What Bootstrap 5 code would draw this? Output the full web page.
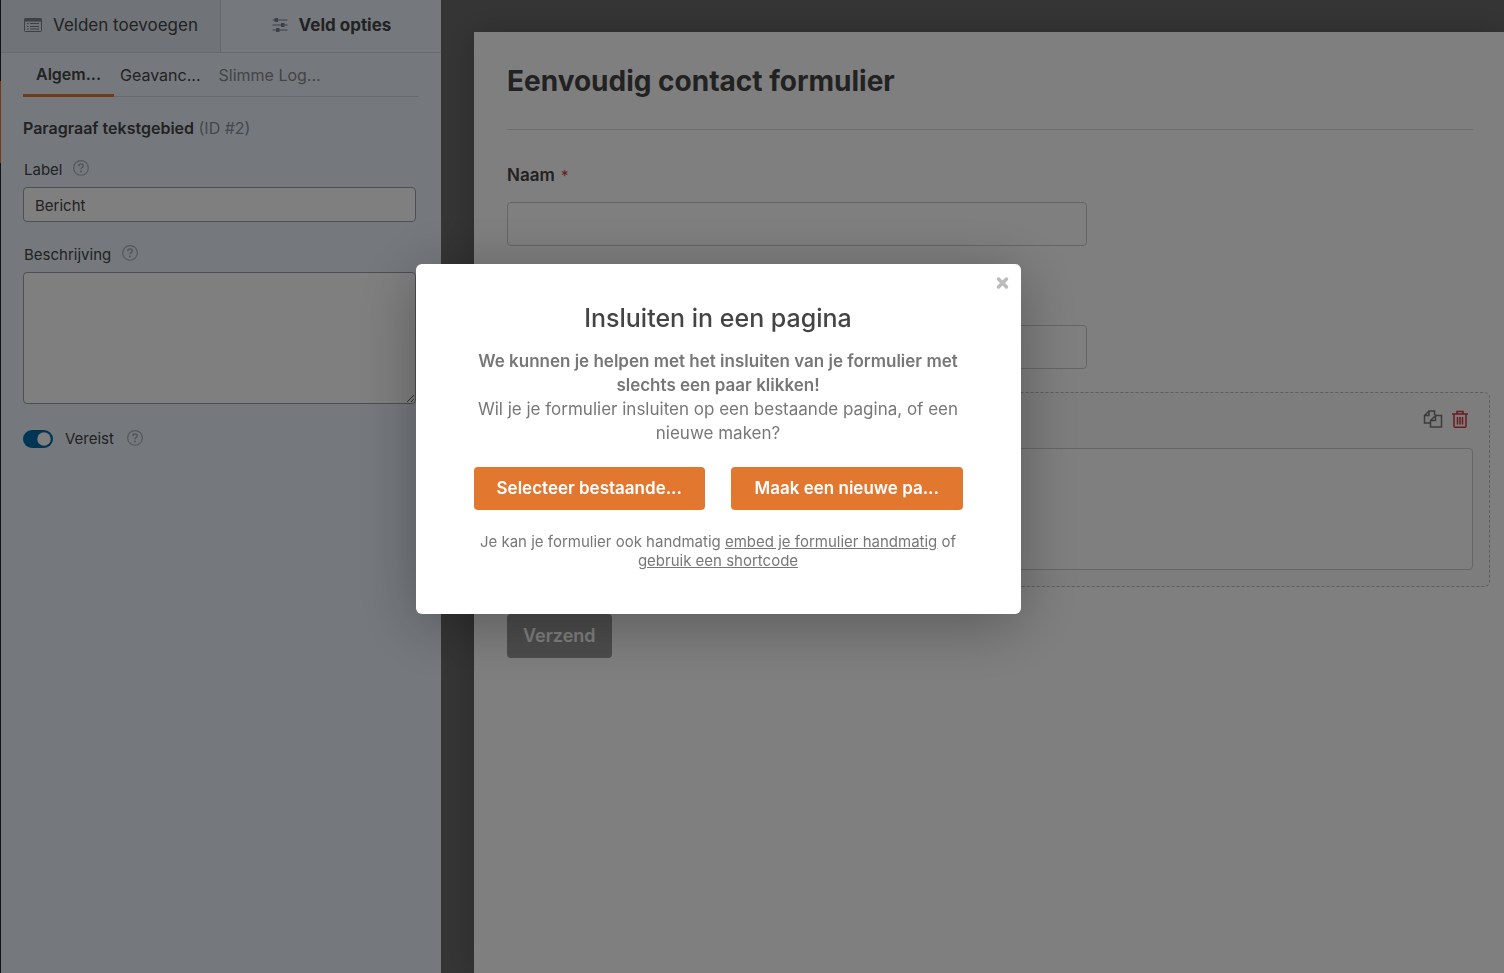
<!DOCTYPE html>
<html lang="nl">
<head>
<meta charset="utf-8">
<meta name="viewport" content="width=device-width, initial-scale=1">
<title>Formulierbouwer</title>
<link href="https://cdn.jsdelivr.net/npm/bootstrap@5.3.0/dist/css/bootstrap.min.css" rel="stylesheet">
<style>
  body { font-family: Inter, "Liberation Sans", sans-serif; font-size: 15px; line-height: 20px; color: #444; background: #6b6b6b; }
  .rail { width: 1px; background: #23262b; }
  .rail-active { height: 82px; margin-top: 81px; background: #e27730; }
  .options-panel { width: 440px; background: #ebf3fc; }
  .panel-tab { height: 53px; border: 0; border-bottom: 1px solid #ced7e0; background: transparent; color: #444; font-size: 17px; gap: 10px; }
  .panel-tab svg { color: #78828f; }
  .panel-tab-idle { background: #e0e8f0; border-right: 1px solid #ced7e0; }
  .group-tabs { margin: 0 22px; height: 44px; border-bottom: 1px solid #ced7e0; }
  .group-tab { border: 0; background: transparent; padding: 0 12px 0 6px; height: 44px; line-height: 42px; font-size: 16px; color: #444; }
  .group-tab.current { padding: 0 13px; border-bottom: 3px solid #e27730; font-weight: 600; }
  .group-tab.muted-tab { color: #86888c; }
  .field-settings { padding: 21px 25px 0 22px; }
  .field-name { font-size: 16px; margin-bottom: 22px; }
  .setting-label { gap: 10px; margin-bottom: 7px; padding-left: 1px; }
  .soft { color: #86919e; }
  .help { color: #a6adb5; }
  .setting { border: 1px solid #999fa6; border-radius: 4px; font-size: 15px; color: #444; padding: 1px 11px 0; height: 35px; background: #fff; margin-bottom: 23px; }
  .setting-area { height: 132px; margin-bottom: 25px; }
  .switch-line { gap: 12px; }
  .switch-line .form-check-input { width: 30px; height: 18px; margin: 0; border: 0; background-color: #036aab; }
  .preview { margin: 32px 0 0 33px; padding: 32px 31px 0 33px; background: #fff; box-shadow: 0 0 30px rgba(0,0,0,.2); }
  .form-title { font-size: 28px; line-height: 34px; font-weight: 700; margin: 0; }
  .form-head { padding-bottom: 31px; border-bottom: 1px solid #ddd; margin-bottom: 16px; }
  .field-box { margin: 0 -17px 6px; padding: 16px; border: 1px dashed transparent; border-radius: 6px; }
  .field-box.selected { border-color: #bbb; background: #fafafa; }
  .field-label { font-size: 17px; line-height: 24px; font-weight: 600; }
  .star { font-size: 15px; font-weight: 400; color: #d63638; margin-left: 2px; }
  .field-top { height: 24px; margin-bottom: 15px; }
  .answer { border: 1px solid #ccc; border-radius: 4px; height: 44px; width: 60%; background: #fff; }
  .answer-area { height: 122px; width: 100%; resize: none; }
  .tool-button { border: 0; background: transparent; padding: 0; line-height: 0; }
  .send { margin-top: 21px; height: 44px; padding: 0 16px; border: 0; border-radius: 4px; background: #999; color: #fff; font-size: 18px; font-weight: 600; }
  .shade { background: rgba(0,0,0,.5); padding: 0 68px 95px 0; }
  .embed-dialog { width: 605px; background: #fff; border-radius: 6px; padding: 36px 58px 44px; box-shadow: 0 10px 60px rgba(0,0,0,.3); color: #777; }
  .embed-dialog h2 { font-size: 25px; line-height: 36px; font-weight: 500; color: #444; margin: 0 0 13px; }
  .embed-text { font-size: 17px; line-height: 24px; margin: 0 0 22px; }
  .embed-text strong { font-weight: 600; }
  .choice { height: 43px; border: 0; border-radius: 4px; background: #e27730; color: #fff; font-size: 17px; font-weight: 600; padding: 0 20px 2px; }
  .choices { gap: 26px; margin-bottom: 22px; }
  .embed-note { font-size: 15px; line-height: 19px; margin: 0; }
  .embed-note a { color: inherit; }
  .dismiss { top: 12px; right: 12px; border: 0; background: transparent; padding: 0; line-height: 0; }
</style>
</head>
<body>
<svg width="0" height="0" class="position-absolute" aria-hidden="true">
  <symbol id="help" viewBox="0 0 16 16"><circle cx="8" cy="7" r="6.5" fill="none" stroke="currentColor"/><path d="M6 5.600C6 4.200 6.800 3.600 8 3.600s2 .7 2 1.700C10 6.700 8 6.600 8 8.200" fill="none" stroke="currentColor" stroke-width="1.400"/><circle cx="8" cy="10.200" r=".9" fill="currentColor"/></symbol>
</svg>
<div class="d-flex min-vh-100">
  <div class="rail flex-shrink-0"><div class="rail-active"></div></div>
  <aside class="options-panel flex-shrink-0">
    <div class="d-flex">
      <button type="button" class="panel-tab panel-tab-idle w-50 d-flex align-items-center justify-content-center pb-1">
        <svg width="20" height="16" viewBox="0 0 20 16" fill="none" stroke="currentColor"><rect x="1.500" y="1.500" width="17" height="13" rx="1"/><path d="M1.500 3H18.500" stroke-width="3"/><path d="M4 6.500h1.500M7 6.500h9M4 9.500h1.500M7 9.500h9M4 12h1.500M7 12h9"/></svg>
        Velden toevoegen
      </button>
      <button type="button" class="panel-tab w-50 d-flex align-items-center justify-content-center fw-bold pb-1">
        <svg width="18" height="16" viewBox="0 0 18 16" fill="currentColor" stroke="currentColor"><path d="M1.500 3H16.500M1.500 8H16.500M1.500 13H16.500"/><rect x="4" y="1.500" width="2.500" height="3"/><rect x="10.500" y="6.500" width="2.500" height="3"/><rect x="5.500" y="11.500" width="2.500" height="3"/></svg>
        Veld opties
      </button>
    </div>
    <nav class="group-tabs d-flex">
      <button type="button" class="group-tab current">Algem...</button>
      <button type="button" class="group-tab">Geavanc...</button>
      <button type="button" class="group-tab muted-tab">Slimme Log...</button>
    </nav>
    <div class="field-settings">
      <div class="field-name"><strong class="fw-semibold">Paragraaf tekstgebied</strong> <span class="soft">(ID #2)</span></div>
      <div class="setting-label d-flex"><label for="label">Label</label><svg class="help" width="18" height="18"><use href="#help"/></svg></div>
      <input id="label" type="text" class="setting w-100 d-block" value="Bericht">
      <div class="setting-label d-flex"><label for="description">Beschrijving</label><svg class="help" width="18" height="18"><use href="#help"/></svg></div>
      <textarea id="description" class="setting setting-area w-100 d-block"></textarea>
      <div class="switch-line form-switch d-flex align-items-center p-0">
        <input id="required" type="checkbox" role="switch" class="form-check-input" checked>
        <label for="required">Vereist</label>
        <svg class="help" width="18" height="18"><use href="#help"/></svg>
      </div>
    </div>
  </aside>
  <main class="preview flex-grow-1">
    <header class="form-head"><h1 class="form-title">Eenvoudig contact formulier</h1></header>
    <form>
      <div class="field-box">
        <div class="field-top"><label class="field-label" for="name">Naam <span class="star">*</span></label></div>
        <input id="name" type="text" class="answer d-block">
      </div>
      <div class="field-box">
        <div class="field-top"></div>
        <input type="email" class="answer d-block" aria-label="E-mail">
      </div>
      <div class="field-box selected">
        <div class="field-top d-flex justify-content-end align-items-start gap-2 pe-1">
          <button type="button" class="tool-button" aria-label="Dupliceren"><svg width="20" height="20" viewBox="0 0 20 20" fill="none" stroke="#777" stroke-width="1.500"><path d="M7 14H1.500V6.500L6 2h5.500v4M6 2v4.500H1.500"/><path d="M12.500 6.500H18.500V18H7.500V11.500L12.500 6.500V11.500H7.500"/></svg></button>
          <button type="button" class="tool-button" aria-label="Verwijderen"><svg width="18" height="20" viewBox="0 0 18 20" fill="none" stroke="#d63638" stroke-width="1.500"><path d="M1 5H17M6 5V2.500H12V5M3 5V17Q3 18.200 4.200 18.200H13.800Q15 18.200 15 17V5M6.500 8V15.500M9 8V15.500M11.500 8V15.500"/></svg></button>
        </div>
        <textarea class="answer answer-area d-block" aria-label="Bericht"></textarea>
      </div>
      <button type="button" class="send">Verzend</button>
    </form>
  </main>
</div>
<div class="shade modal d-flex align-items-center justify-content-center" role="dialog" aria-modal="true" aria-labelledby="embed-title">
  <section class="embed-dialog position-relative text-center">
    <button type="button" class="dismiss position-absolute" aria-label="Sluiten"><svg width="13" height="14" viewBox="0 0 13 14"><path d="M2.500 3L10.500 11M10.500 3L2.500 11" stroke="#bbb" stroke-width="3.500" stroke-linecap="round"/></svg></button>
    <h2 id="embed-title">Insluiten in een pagina</h2>
    <p class="embed-text"><strong>We kunnen je helpen met het insluiten van je formulier met slechts een paar klikken!</strong><br>Wil je je formulier insluiten op een bestaande pagina, of een nieuwe maken?</p>
    <div class="choices d-flex">
      <button type="button" class="choice w-50">Selecteer bestaande...</button>
      <button type="button" class="choice w-50">Maak een nieuwe pa...</button>
    </div>
    <p class="embed-note">Je kan je formulier ook handmatig <a href="#">embed je formulier handmatig</a> of <a href="#">gebruik een shortcode</a></p>
  </section>
</div>
<script src="https://cdn.jsdelivr.net/npm/bootstrap@5.3.0/dist/js/bootstrap.bundle.min.js"></script>
</body>
</html>
